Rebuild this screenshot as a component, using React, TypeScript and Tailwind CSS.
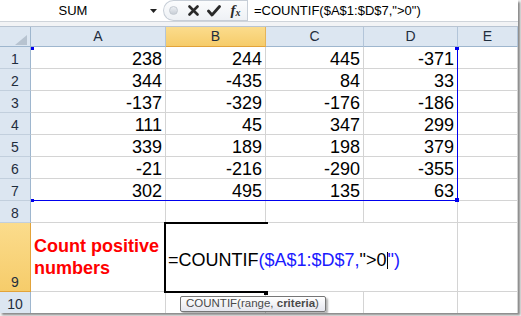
import React from "react";

const data = [
  [238, 244, 445, -371],
  [344, -435, 84, 33],
  [-137, -329, -176, -186],
  [111, 45, 347, 299],
  [339, 189, 198, 379],
  [-21, -216, -290, -355],
  [302, 495, 135, 63],
];

const cols = ["A", "B", "C", "D", "E"];

const grid = "border-r border-b border-[#d4d4d4]";
const rowHead =
  "flex items-end justify-center leading-[18px] text-[14px] text-[#1f2d3d] bg-[#dce6f1] border-r border-r-[#9eb6ce] border-b border-b-[#c2cfdd]";

const FormulaBar = () => (
  <div className="flex h-[21px] items-stretch bg-white">
    <div className="w-[146px] flex items-center justify-center text-[13px] text-black">SUM</div>
    <div className="w-[17px] flex items-center pl-[4px]">
      <svg width="7" height="4" viewBox="0 0 7 4">
        <polygon points="0,0 7,0 3.5,4" fill="#222" />
      </svg>
    </div>
    {/* cancel / enter / insert function */}
    <div className="w-[84px] flex items-center rounded-l-[11px] border-l border-y border-[#c7ced7] bg-gradient-to-b from-[#fbfcfd] to-[#eef1f5]">
      <div className="w-[19px] flex items-center justify-center">
        <div className="w-[9px] h-[9px] rounded-full bg-gradient-to-b from-[#eceff3] to-[#c9cfd7] border border-[#c3c9d1]" />
      </div>
      <div className="w-[20px] flex items-center justify-center">
        <svg width="11" height="11" viewBox="0 0 11 11">
          <path d="M1.5 1.5 L9.5 9.5 M9.5 1.5 L1.5 9.5" stroke="#2a2a2a" strokeWidth="2.6" strokeLinecap="round" />
        </svg>
      </div>
      <div className="w-[22px] flex items-center justify-center">
        <svg width="14" height="12" viewBox="0 0 14 12">
          <path d="M1.5 6 L5 10 L12.5 1.5" stroke="#2a2a2a" strokeWidth="2.8" fill="none" strokeLinecap="round" strokeLinejoin="round" />
        </svg>
      </div>
      <div className="w-[21px] flex items-center justify-center font-['Liberation_Serif',serif] italic font-bold text-[#2a2a2a]">
        <span className="text-[15px] leading-none">f</span>
        <span className="text-[10px] leading-none mt-[4px]">x</span>
      </div>
    </div>
    <div className="flex-1 flex items-center pl-[6px] border-l border-[#c7ced7] text-[13px] text-black">
      =COUNTIF($A$1:$D$7,"&gt;0")
    </div>
  </div>
);

const Sheet = () => (
  <div className="relative grid grid-cols-[31px_135px_100px_98px_94px_60px] grid-rows-[20px_repeat(8,22px)_69px_22px]">
    {/* header row */}
    <div className="relative bg-[#dce6f1] border-r border-b border-[#9eb6ce]">
      <svg className="absolute left-[15px] top-[8px]" width="12" height="10" viewBox="0 0 12 10">
        <polygon points="12,0 12,10 0,10" fill="#b7c3d0" />
      </svg>
    </div>
    {cols.map((c) =>
      c === "B" ? (
        <div
          key={c}
          className="flex items-center justify-center text-[14px] text-[#1f2d3d] bg-gradient-to-b from-[#fbdc8c] to-[#f6cc6a] border-r border-r-[#e5b45a] border-b border-b-[#e2a33a]"
        >
          {c}
        </div>
      ) : (
        <div
          key={c}
          className="flex items-center justify-center text-[14px] text-[#1f2d3d] bg-[#dce6f1] border-r border-r-[#b3c5d9] border-b border-b-[#9eb6ce]"
        >
          {c}
        </div>
      )
    )}

    {/* rows 1-7 */}
    {data.map((row, r) => (
      <React.Fragment key={r}>
        <div className={rowHead}>{r + 1}</div>
        {row.map((v, i) => (
          <div key={i} className={`${grid} flex items-end justify-end pr-[3px] text-[18px] leading-[18px] text-black`}>
            {v}
          </div>
        ))}
        <div className={grid} />
      </React.Fragment>
    ))}

    {/* row 8 */}
    <div className={rowHead}>8</div>
    <div className={grid} />
    <div className={grid} />
    <div className={grid} />
    <div className={grid} />
    <div className={grid} />

    {/* row 9 */}
    <div className="flex items-end justify-center leading-[18px] text-[14px] text-[#1f2d3d] bg-gradient-to-b from-[#fbdc8c] to-[#f6cc6a] border-r border-r-[#e2a33a] border-b border-b-[#e2a33a]">
      9
    </div>
    <div className={`${grid} flex flex-col justify-center pl-[3px] text-[18px] leading-[22px] font-bold text-[#ff0000]`}>
      <span>Count positive</span>
      <span>numbers</span>
    </div>
    <div className={`${grid} col-span-3 relative flex items-center pt-[6px] pl-[2px] text-[18px] leading-[22px] whitespace-nowrap`}>
      <span className="text-black">=COUNTIF</span>
      <span className="text-[#1a1aff]">($A$1:$D$7,</span>
      <span className="text-black">"&gt;0</span>
      <span className="inline-block w-[1px] h-[17px] bg-black" />
      <span className="text-[#1a1aff]">")</span>
      {/* active cell outline */}
      <div className="absolute left-[-2px] top-[-1px] w-[104px] h-[71px] border-2 border-r-0 border-black" />
      <div className="absolute left-[98px] top-[68px] w-[4px] h-[4px] bg-black" />
      {/* function tooltip */}
      <div className="absolute z-10 left-[14px] top-[73px] w-[146px] h-[16px] flex items-center pl-[5px] rounded-[2px] border border-[#767676] bg-gradient-to-b from-white to-[#e5e6ee] shadow-[2px_2px_2px_rgba(0,0,0,0.3)] text-[11.5px] leading-none text-[#4a4a4a]">
        COUNTIF(range,&nbsp;<b>criteria</b>)
      </div>
    </div>
    <div className={grid} />

    {/* row 10 */}
    <div className={rowHead}>10</div>
    <div className={grid} />
    <div className={grid} />
    <div className={grid} />
    <div className={grid} />
    <div className={grid} />

    {/* range outline for $A$1:$D$7 */}
    <div className="absolute left-[457px] top-[20px] w-[1px] h-[154px] bg-[#0000ee]" />
    <div className="absolute left-[31px] top-[173px] w-[427px] h-[1px] bg-[#0000ee]" />
    <div className="absolute left-[31px] top-[20px] w-[3px] h-[3px] bg-[#0000ee]" />
    <div className="absolute left-[455px] top-[20px] w-[4px] h-[3px] bg-[#0000ee]" />
    <div className="absolute left-[455px] top-[171px] w-[4px] h-[4px] bg-[#0000ee]" />
    <div className="absolute left-[31px] top-[172px] w-[3px] h-[3px] bg-[#0000ee]" />
  </div>
);

export default function App() {
  return (
    <div className="w-[521px] h-[316px] bg-[#f0f0f0] font-['Liberation_Sans',Arial,sans-serif]">
      <div className="w-[518px] h-[313px] bg-white overflow-hidden shadow-[2px_2px_2px_#8a8a8a]">
        <FormulaBar />
        <div className="h-[6px] bg-[#f2f3f5] border-t border-t-[#cfd4da] border-b border-b-[#b8c4d2]" />
        <Sheet />
      </div>
    </div>
  );
}
